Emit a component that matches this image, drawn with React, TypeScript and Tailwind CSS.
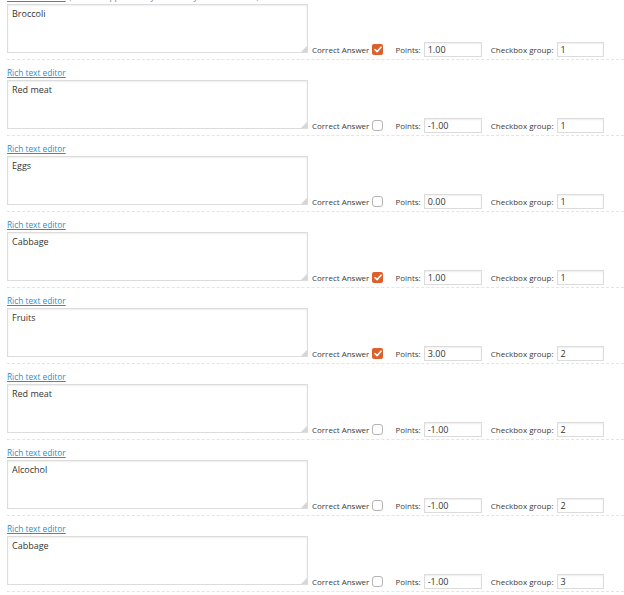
import React from "react";

const answers = [
  { text: "Broccoli", correct: true, points: "1.00", group: "1" },
  { text: "Red meat", correct: false, points: "-1.00", group: "1" },
  { text: "Eggs", correct: false, points: "0.00", group: "1" },
  { text: "Cabbage", correct: true, points: "1.00", group: "1" },
  { text: "Fruits", correct: true, points: "3.00", group: "2" },
  { text: "Red meat", correct: false, points: "-1.00", group: "2" },
  { text: "Alcochol", correct: false, points: "-1.00", group: "2" },
  { text: "Cabbage", correct: false, points: "-1.00", group: "3" },
];

function CheckBox({ checked }: { checked: boolean }) {
  if (checked) {
    return (
      <span className="ml-[3px] flex h-[11px] w-[11px] items-center justify-center rounded-[2px] bg-[#dd5f2a]">
        <svg width="8" height="7" viewBox="0 0 8 7" fill="none">
          <path d="M1 3.6 L3.1 5.6 L7 1.2" stroke="#fff" strokeWidth="1.6" strokeLinecap="round" strokeLinejoin="round" />
        </svg>
      </span>
    );
  }
  return <span className="ml-[3px] h-[11px] w-[11px] rounded-[3px] border border-[#b4b4b4] bg-white" />;
}

export default function App() {
  return (
    <div className="min-h-screen w-[624px] overflow-hidden bg-white font-['Open_Sans',sans-serif] text-[#3c3c3c]">
      <div className="-mt-[16px] pl-[7px]">
        {answers.map((a, i) => (
          <div key={i} className="border-b border-dashed border-[#e4e4e4] pt-[8px] pb-[2px]">
            {/* link */}
            <div className="flex h-[10px] items-center text-[8.3px] leading-[10px]">
              <a href="#" className="text-[#2a90c4] underline">Rich text editor</a>
              {i === 0 && (
                <span className="ml-[3px] text-[#777]">(This link appears only on already saved answers)</span>
              )}
            </div>
            <div className="mt-[2px] flex items-end">
              {/* textarea + grip */}
              <div className="relative mb-[4px] h-[49px] w-[301px]">
                <textarea
                  readOnly
                  defaultValue={a.text}
                  className="h-full w-full resize-none border border-[#dcdcdc] bg-white px-[4px] py-[3px] text-[9px] leading-[12px] text-[#333] shadow-[inset_0_1px_2px_rgba(0,0,0,0.07)] outline-none"
                />
                <svg className="absolute right-[1px] bottom-[1px]" width="6" height="6" viewBox="0 0 6 6">
                  <path d="M6 0 L6 6 L0 6 Z" fill="#d6d6d6" />
                </svg>
              </div>
              {/* controls */}
              <div className="ml-[4px] flex h-[15px] items-center text-[8px]">
                <span>Correct Answer</span>
                <CheckBox checked={a.correct} />
                <span className="ml-[12px]">Points:</span>
                <div className="ml-[3px] flex h-[15px] w-[58px] items-center border border-[#dcdcdc] px-[3px] text-[9px] text-[#333] shadow-[inset_0_1px_2px_rgba(0,0,0,0.07)]">
                  {a.points}
                </div>
                <span className="ml-[9px]">Checkbox group:</span>
                <div className="ml-[3px] flex h-[15px] w-[47px] items-center border border-[#dcdcdc] px-[3px] text-[9px] text-[#333] shadow-[inset_0_1px_2px_rgba(0,0,0,0.07)]">
                  {a.group}
                </div>
              </div>
            </div>
          </div>
        ))}
      </div>
    </div>
  );
}
